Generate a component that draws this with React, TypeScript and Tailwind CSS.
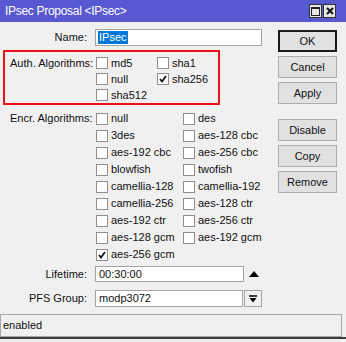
import React from 'react';

const font = { fontFamily: '"Liberation Sans", Arial, sans-serif' };

function Check({ label, checked = false }: { label: string; checked?: boolean }) {
  return (
    <div className="flex items-center h-full">
      <span className="w-[12px] h-[12px] border border-[#8f8f8f] bg-white flex items-center justify-center shrink-0">
        {checked && (
          <svg width="8" height="8" viewBox="0 0 8 8">
            <path d="M1 4 L3 6.5 L7 1" fill="none" stroke="#111" strokeWidth="1.7" />
          </svg>
        )}
      </span>
      <span className="ml-[3px] whitespace-nowrap">{label}</span>
    </div>
  );
}

function Btn({ label, primary = false }: { label: string; primary?: boolean }) {
  return (
    <div
      className={`w-[59px] h-[22px] flex items-center justify-center bg-[#e1e1e1] ${
        primary ? 'border-2 border-[#1a1a1a]' : 'border border-[#adadad]'
      }`}
    >
      {label}
    </div>
  );
}

const auth: [string, boolean][] = [
  ['md5', false], ['sha1', false],
  ['null', false], ['sha256', true],
  ['sha512', false],
];

const encr: [string, boolean][] = [
  ['null', false], ['des', false],
  ['3des', false], ['aes-128 cbc', false],
  ['aes-192 cbc', false], ['aes-256 cbc', false],
  ['blowfish', false], ['twofish', false],
  ['camellia-128', false], ['camellia-192', false],
  ['camellia-256', false], ['aes-128 ctr', false],
  ['aes-192 ctr', false], ['aes-256 ctr', false],
  ['aes-128 gcm', false], ['aes-192 gcm', false],
  ['aes-256 gcm', true],
];

export default function App() {
  return (
    <div
      style={font}
      className="w-[346px] h-[342px] bg-[#f0f0f0] text-[11px] text-[#111] flex flex-col overflow-hidden"
    >
      {/* Title bar */}
      <div className="h-[22px] bg-[#5858d0] flex items-center justify-between pl-[5px] pr-[10px] shrink-0">
        <span className="text-white text-[12px] tracking-[-0.3px]">IPsec Proposal &lt;IPsec&gt;</span>
        <div className="flex gap-[1px]">
          <div className="w-[13px] h-[14px] bg-[#e6e6e6] border border-[#333] flex items-center justify-center">
            <div className="w-[9px] h-[9px] border border-[#222] border-t-2" />
          </div>
          <div className="w-[13px] h-[14px] bg-[#e6e6e6] border border-[#333] flex items-center justify-center">
            <svg width="8" height="8" viewBox="0 0 8 8">
              <path d="M1 1 L7 7 M7 1 L1 7" stroke="#111" strokeWidth="2" />
            </svg>
          </div>
        </div>
      </div>

      {/* Body */}
      <div className="flex flex-1">
        <div className="w-[272px] pt-[7px]">
          {/* Name */}
          <div className="flex items-center h-[17px]">
            <span className="w-[95px] pr-[8px] text-right">Name:</span>
            <div className="w-[167px] h-[17px] border border-[#a5a5a5] bg-white flex items-center pl-[2px]">
              <span className="bg-[#0078d7] text-white px-[1px] leading-[13px]">IPsec</span>
            </div>
          </div>

          {/* Auth algorithms */}
          <div className="mt-[4px] ml-[3px] w-[217px] border-2 border-[#e8141a] pt-[3px] flex">
            <div className="w-[91px] pl-[5px] h-[16px] flex items-center">Auth. Algorithms:</div>
            <div className="grid grid-cols-[61px_1fr] auto-rows-[16px]">
              {auth.map(([l, c]) => (
                <Check key={l} label={l} checked={c} />
              ))}
            </div>
          </div>

          {/* Encr algorithms */}
          <div className="mt-[5px] flex">
            <div className="w-[96px] pl-[10px] h-[17px] flex items-center">Encr. Algorithms:</div>
            <div className="grid grid-cols-[87px_1fr] auto-rows-[17px]">
              {encr.map(([l, c]) => (
                <Check key={l} label={l} checked={c} />
              ))}
            </div>
          </div>

          {/* Lifetime */}
          <div className="mt-[3px] flex items-center h-[16px]">
            <span className="w-[95px] pr-[8px] text-right">Lifetime:</span>
            <div className="w-[149px] h-[16px] border border-[#a5a5a5] bg-white flex items-center pl-[3px]">
              00:30:00
            </div>
            <svg className="ml-[5px]" width="10" height="6" viewBox="0 0 10 6">
              <path d="M0 6 L5 0 L10 6 Z" fill="#000" />
            </svg>
          </div>

          {/* PFS group */}
          <div className="mt-[8px] flex items-center h-[17px]">
            <span className="w-[95px] pr-[8px] text-right">PFS Group:</span>
            <div className="w-[148px] h-[17px] border border-[#a5a5a5] bg-white flex items-center pl-[3px]">
              modp3072
            </div>
            <div className="ml-[1px] w-[18px] h-[17px] border border-[#a5a5a5] bg-[#f0f0f0] flex items-center justify-center">
              <svg width="8" height="8" viewBox="0 0 8 8">
                <path d="M0 1 H8" stroke="#000" strokeWidth="1.5" />
                <path d="M0.5 3 H7.5 L4 7.5 Z" fill="#000" />
              </svg>
            </div>
          </div>
        </div>

        {/* Buttons */}
        <div className="ml-[6px] pt-[8px] flex flex-col gap-[4px]">
          <Btn label="OK" primary />
          <Btn label="Cancel" />
          <Btn label="Apply" />
          <div className="h-[7px]" />
          <Btn label="Disable" />
          <Btn label="Copy" />
          <Btn label="Remove" />
        </div>
      </div>

      {/* Status bar */}
      <div className="h-[23px] mr-[4px] border border-[#a8a8a8] flex items-center pl-[2px] shrink-0">
        enabled
      </div>
      <div className="h-[2px] bg-[#3c3c3c] shrink-0" />
      <div className="h-[3px] shrink-0" />
    </div>
  );
}
